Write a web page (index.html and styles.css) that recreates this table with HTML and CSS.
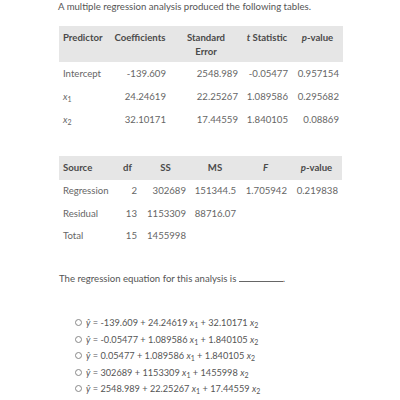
FILE: index.html
```html
<!DOCTYPE html>
<html>
<head>
<meta charset="utf-8">
<link rel="stylesheet" href="styles.css">
</head>
<body>
<div class="page">
  <p class="intro">A multiple regression analysis produced the following tables.</p>

  <table class="tbl t1">
    <colgroup><col class="c1a"><col class="c1b"><col class="c1c"><col class="c1d"><col class="c1e"></colgroup>
    <thead>
      <tr><th class="left">Predictor</th><th>Coefficients</th><th>Standard<br>Error</th><th><i>t</i> Statistic</th><th><i>p</i>-value</th></tr>
    </thead>
    <tbody>
      <tr><td class="left">Intercept</td><td>-139.609</td><td>2548.989</td><td>-0.05477</td><td>0.957154</td></tr>
      <tr><td class="left"><i>x</i><sub>1</sub></td><td>24.24619</td><td>22.25267</td><td>1.089586</td><td>0.295682</td></tr>
      <tr><td class="left"><i>x</i><sub>2</sub></td><td>32.10171</td><td>17.44559</td><td>1.840105</td><td>0.08869</td></tr>
    </tbody>
  </table>

  <table class="tbl t2">
    <colgroup><col class="c2a"><col class="c2b"><col class="c2c"><col class="c2d"><col class="c2e"><col class="c2f"></colgroup>
    <thead>
      <tr><th class="left">Source</th><th>df</th><th>SS</th><th>MS</th><th><i>F</i></th><th><i>p</i>-value</th></tr>
    </thead>
    <tbody>
      <tr><td class="left">Regression</td><td>2</td><td>302689</td><td>151344.5</td><td>1.705942</td><td>0.219838</td></tr>
      <tr><td class="left">Residual</td><td>13</td><td>1153309</td><td>88716.07</td><td></td><td></td></tr>
      <tr><td class="left">Total</td><td>15</td><td>1455998</td><td></td><td></td><td></td></tr>
    </tbody>
  </table>

  <p class="question">The regression equation for this analysis is <span class="blank"></span>.</p>

  <ul class="options">
    <li><span class="radio"></span><span><i>ŷ</i> = -139.609 + 24.24619 <i>x</i><sub>1</sub> + 32.10171 <i>x</i><sub>2</sub></span></li>
    <li><span class="radio"></span><span><i>ŷ</i> = -0.05477 + 1.089586 <i>x</i><sub>1</sub> + 1.840105 <i>x</i><sub>2</sub></span></li>
    <li><span class="radio"></span><span><i>ŷ</i> = 0.05477 + 1.089586 <i>x</i><sub>1</sub> + 1.840105 <i>x</i><sub>2</sub></span></li>
    <li><span class="radio"></span><span><i>ŷ</i> = 302689 + 1153309 <i>x</i><sub>1</sub> + 1455998 <i>x</i><sub>2</sub></span></li>
    <li><span class="radio"></span><span><i>ŷ</i> = 2548.989 + 22.25267 <i>x</i><sub>1</sub> + 17.44559 <i>x</i><sub>2</sub></span></li>
  </ul>
</div>
</body>
</html>
```
FILE: styles.css
```css
html, body {
  margin: 0;
  padding: 0;
  background: #ffffff;
}
body {
  font-family: Lato, "Open Sans", sans-serif;
  color: #5a5a5a;
  font-size: 9.6px;
}
.page {
  padding-left: 58px;
}
.intro {
  margin: 0;
  line-height: 14px;
  color: #555;
}
.tbl {
  border-collapse: collapse;
  table-layout: fixed;
  margin-left: 1px;
}
.tbl th {
  background: #e6e6e6;
  color: #4a4a4a;
  font-weight: bold;
  text-align: center;
  vertical-align: top;
  line-height: 14px;
  padding: 5px 4px 3px 4px;
  white-space: nowrap;
}
.tbl td {
  text-align: right;
  padding: 0 4px;
  height: 23px;
  line-height: 14px;
  white-space: nowrap;
  color: #666;
}
.tbl .left {
  text-align: left;
}
.tbl sub {
  font-size: 7px;
  line-height: 0;
  vertical-align: -2px;
}
.t1 {
  margin-top: 12px;
  width: 284px;
}
.c1a { width: 51px; }
.c1b { width: 60px; }
.c1c { width: 72px; }
.c1d { width: 50px; }
.c1e { width: 51px; }

.t2 {
  margin-top: 25px;
  width: 283px;
}
.t2 th {
  padding: 5px 4px 5px 4px;
  vertical-align: middle;
}
.t2 td {
  height: 22.5px;
}
.c2a { width: 55px; }
.c2b { width: 27px; }
.c2c { width: 49px; }
.c2d { width: 50px; }
.c2e { width: 51px; }
.c2f { width: 51px; }

.question {
  margin: 24px 0 0 1px;
  line-height: 14px;
  color: #555;
}
.blank {
  display: inline-block;
  width: 44px;
  border-bottom: 1px solid #666;
  vertical-align: baseline;
}
.options {
  list-style: none;
  margin: 29px 0 0 0;
  padding: 0 0 0 17px;
  font-size: 9.2px;
  color: #555;
}
.options li {
  display: flex;
  align-items: center;
  gap: 4px;
  height: 16.5px;
}
.options sub {
  font-size: 7px;
  line-height: 0;
  vertical-align: -2px;
}
.radio {
  display: inline-block;
  width: 5px;
  height: 5px;
  border: 1px solid #888;
  border-radius: 50%;
  flex: none;
}
```
